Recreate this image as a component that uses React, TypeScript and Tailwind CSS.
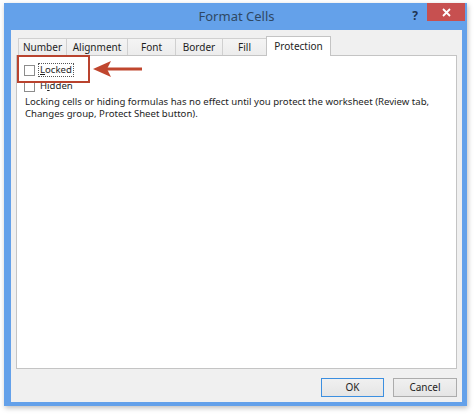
import React from "react";

const font = { fontFamily: '"Noto Sans", "Open Sans", Arial, sans-serif' };

function Tab({ label, w, active }: { label: string; w: number; active?: boolean }) {
  if (active) {
    return (
      <div
        className="relative z-10 -mb-px flex h-[20px] items-center justify-center border border-b-0 border-[#c4c4c4] bg-white text-[10px] text-[#1e1e1e]"
        style={{ width: w }}
      >
        {label}
      </div>
    );
  }
  return (
    <div
      className="-ml-px flex h-[17px] items-center justify-center border border-b-0 border-[#d0d0d0] bg-gradient-to-b from-[#f4f4f4] to-[#ececec] text-[10px] text-[#1e1e1e] first:ml-0"
      style={{ width: w }}
    >
      {label}
    </div>
  );
}

export default function App() {
  return (
    <div className="h-[416px] w-[474px] bg-white pl-[4px] pt-[3px]" style={font}>
      <div className="flex h-[403px] w-[463px] flex-col bg-[#64a1ea] pb-[4px] pl-[7px] pr-[5px] shadow-[1px_2px_5px_rgba(0,0,0,0.25)]">
        {/* title bar */}
        <div className="relative flex h-[27px] shrink-0 items-center justify-center">
          <span className="text-[13px] text-[#2f4864]">Format Cells</span>
          <span className="absolute right-[44px] top-[4px] text-[12px] font-bold text-[#1f3552]">?</span>
          <div className="absolute right-[-3px] top-0 flex h-[18px] w-[38px] items-center justify-center bg-[#c75050]">
            <svg width="9" height="9" viewBox="0 0 9 9">
              <path d="M1 1 L8 8 M8 1 L1 8" stroke="white" strokeWidth="1.8" />
            </svg>
          </div>
        </div>
        {/* body */}
        <div className="flex flex-1 flex-col bg-[#f0f0f0] px-[5px] pt-[6px]">
          <div className="flex items-end pl-[2px]">
            <Tab label="Number" w={49} />
            <Tab label="Alignment" w={62} />
            <Tab label="Font" w={49} />
            <Tab label="Border" w={48} />
            <Tab label="Fill" w={45} />
            <div className="-ml-px">
              <Tab label="Protection" w={65} active />
            </div>
          </div>
          <div className="relative h-[314px] border border-[#c4c4c4] bg-white pl-[7px] pt-[6px] text-[9.6px] text-[#1e1e1e]">
            {/* annotation box */}
            <div className="pointer-events-none absolute left-[0px] top-[-1px] h-[28px] w-[73px] border-2 border-[#b9432e]" />
            <svg className="absolute left-[75px] top-[3px]" width="52" height="20" viewBox="0 0 52 20">
              <path d="M1 10 L19 2 L15 10 L19 18 Z" fill="#c0462e" />
              <path d="M15 10 L50 10" stroke="#c0462e" strokeWidth="3" />
            </svg>
            <div className="flex h-[16px] items-center gap-[3px]">
              <div className="h-[11px] w-[11px] border border-[#8c8c8c] bg-white" />
              <span className="border border-dotted border-[#555] px-[1px] leading-[12px]">
                <span className="underline underline-offset-1">L</span>ocked
              </span>
            </div>
            <div className="flex h-[16px] items-center gap-[3px]">
              <div className="h-[11px] w-[11px] border border-[#8c8c8c] bg-white" />
              <span className="px-[2px] leading-[12px]">
                H<span className="underline underline-offset-1">i</span>dden
              </span>
            </div>
            <p className="ml-[1px] mt-[2px] leading-[12px]">
              Locking cells or hiding formulas has no effect until you protect the worksheet (Review tab,
              <br />
              Changes group, Protect Sheet button).
            </p>
          </div>
          <div className="flex justify-end gap-[9px] pt-[9px]">
            <button className="h-[19px] w-[63px] border border-[#3c8fe0] bg-gradient-to-b from-[#f0f0f0] to-[#e5e5e5] text-[10px] text-[#1e1e1e]">
              OK
            </button>
            <button className="h-[19px] w-[64px] border border-[#acacac] bg-gradient-to-b from-[#f0f0f0] to-[#e5e5e5] text-[10px] text-[#1e1e1e]">
              Cancel
            </button>
          </div>
        </div>
      </div>
    </div>
  );
}
